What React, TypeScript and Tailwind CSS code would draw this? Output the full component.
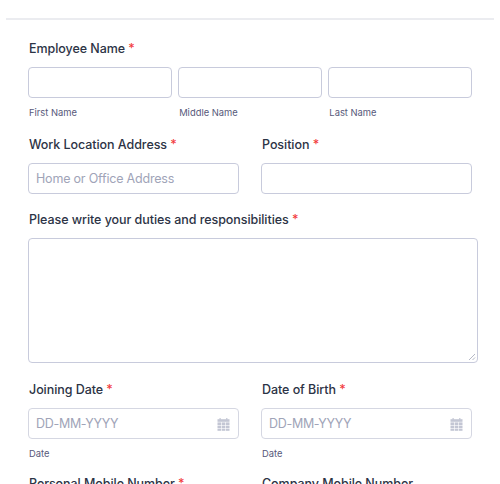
// Employee details form
function Label({ text, required = true }: { text: string; required?: boolean }) {
  return (
    <label className="block pl-px text-[12.5px] leading-[18px] font-[450] tracking-[-0.06px] text-[#2c3345]">
      {text}
      {required && <span className="text-[#f23a3c]"> *</span>}
    </label>
  );
}

function Sub({ text }: { text: string }) {
  return <p className="mt-[9px] pl-px text-[9.4px] leading-[12px] text-[#57597a]">{text}</p>;
}

const inputClass =
  "block w-full h-[31px] rounded-[4px] border border-[#c8cbdc] bg-white px-[7px] text-[12.5px] tracking-[-0.2px] text-[#2c3345] placeholder:text-[#a0a4b8] outline-none";

function CalendarIcon() {
  return (
    <svg width="13" height="13" viewBox="0 0 13 13" className="mt-px shrink-0" fill="#c3c6d4">
      <rect x="2.5" y="0" width="1.2" height="2" />
      <rect x="9.2" y="0" width="1.2" height="2" />
      <rect x="0.5" y="1.2" width="12" height="2.6" />
      <rect x="0.5" y="4.4" width="3.6" height="2.6" />
      <rect x="4.7" y="4.4" width="3.6" height="2.6" />
      <rect x="8.9" y="4.4" width="3.6" height="2.6" />
      <rect x="0.5" y="7.6" width="3.6" height="2.4" />
      <rect x="4.7" y="7.6" width="3.6" height="2.4" />
      <rect x="8.9" y="7.6" width="3.6" height="2.4" />
      <rect x="0.5" y="10.6" width="3.6" height="2.2" />
      <rect x="4.7" y="10.6" width="3.6" height="2.2" />
      <rect x="8.9" y="10.6" width="3.6" height="2.2" />
    </svg>
  );
}

function DateField({ label }: { label: string }) {
  return (
    <div>
      <Label text={label} />
      <div className="mt-[9px] flex h-[31px] items-center rounded-[4px] border border-[#d5d7e2] bg-white px-[7px] pr-[8px]">
        <input
          placeholder="DD-MM-YYYY"
          className="mt-px min-w-0 flex-1 text-[12.5px] tracking-[-0.3px] text-[#2c3345] placeholder:text-[#a0a4b8] outline-none"
        />
        <CalendarIcon />
      </div>
      <Sub text="Date" />
    </div>
  );
}

export default function App() {
  return (
    <div className="h-[484px] overflow-hidden bg-white px-[6px] pt-[18px] font-['Inter',sans-serif]">
      <div className="h-[2px] bg-[#ebecf0]" />
      <div className="pl-[22px] pr-[16px] pt-[20px]">
        <Label text="Employee Name" />
        <div className="mt-[9px] grid grid-cols-3 gap-[6.5px] pr-[6px]">
          <div>
            <input className={inputClass} />
            <Sub text="First Name" />
          </div>
          <div>
            <input className={inputClass} />
            <Sub text="Middle Name" />
          </div>
          <div>
            <input className={inputClass} />
            <Sub text="Last Name" />
          </div>
        </div>

        <div className="mt-[17px] grid grid-cols-2 gap-[22px] pr-[6px]">
          <div>
            <Label text="Work Location Address" />
            <input placeholder="Home or Office Address" className={`${inputClass} mt-[9px]`} />
          </div>
          <div>
            <Label text="Position" />
            <input className={`${inputClass} mt-[9px]`} />
          </div>
        </div>

        <div className="mt-[17px]">
          <Label text="Please write your duties and responsibilities" />
        </div>
        <div className="relative mt-[9px]">
          <textarea className="block h-[125px] w-full resize-none rounded-[4px] border border-[#c8cbdc] bg-white outline-none" />
          <svg width="8" height="8" viewBox="0 0 8 8" className="absolute right-[2px] bottom-[2px]" stroke="#b5b8c6" fill="none">
            <path d="M1 7 L7 1 M4.5 7 L7 4.5" />
          </svg>
        </div>

        <div className="mt-[18px] grid grid-cols-2 gap-[22px] pr-[6px]">
          <DateField label="Joining Date" />
          <DateField label="Date of Birth" />
        </div>

        <div className="mt-[15px] grid grid-cols-2 gap-[22px] pr-[6px]">
          <Label text="Personal Mobile Number" />
          <Label text="Company Mobile Number" required={false} />
        </div>
      </div>
    </div>
  );
}
